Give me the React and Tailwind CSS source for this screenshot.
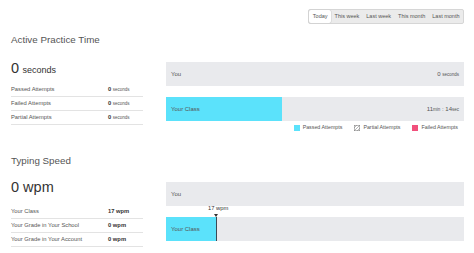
import React from "react";

const ranges = ["Today", "This week", "Last week", "This month", "Last month"];

function StatRow({ label, children }) {
  return (
    <div className="flex h-[14px] items-center border-b border-[#e3e3e3] text-[5.8px] text-[#555]">
      <div className="w-[97px]">{label}</div>
      <div className="font-bold text-[#333]">{children}</div>
    </div>
  );
}

function Bar({ label, fill, right, marker }) {
  return (
    <div className="relative flex h-[24px] items-center bg-[#e9eaed] text-[6px] text-[#555]">
      {fill && <div className="absolute left-0 top-0 h-full bg-[#5be2fb]" style={{ width: fill }} />}
      {marker && (
        <div className="absolute top-0 h-full w-[1px] bg-[#3a4a55]" style={{ left: marker }}>
          <div className="absolute left-[-8px] top-[-12px] w-[17px] whitespace-nowrap text-center text-[5.8px] leading-[7px] text-[#333]">
            17 wpm
          </div>
          <div className="absolute left-[-2px] top-[-3px] h-0 w-0 border-x-[2.5px] border-t-[3px] border-x-transparent border-t-[#333]" />
        </div>
      )}
      <span className="relative pl-[5px]">{label}</span>
      <span className="relative ml-auto pr-[5px]">{right}</span>
    </div>
  );
}

function Legend() {
  return (
    <div className="mt-[3px] flex h-[8px] items-center justify-end gap-[12px] pr-[6px] text-[5.3px] text-[#555]">
      <div className="flex items-center gap-[3px]">
        <div className="h-[6px] w-[6px] bg-[#5be2fb]" />
        Passed Attempts
      </div>
      <div className="flex items-center gap-[3px]">
        <svg width="6" height="6" viewBox="0 0 6 6">
          <rect x="0.25" y="0.25" width="5.5" height="5.5" fill="#fff" stroke="#777" strokeWidth="0.5" />
          <path d="M0 3 L3 0 M0 6 L6 0 M3 6 L6 3" stroke="#888" strokeWidth="0.6" />
        </svg>
        Partial Attempts
      </div>
      <div className="flex items-center gap-[3px]">
        <div className="h-[6px] w-[6px] bg-[#f1507c]" />
        Failed Attempts
      </div>
    </div>
  );
}

export default function App() {
  return (
    <div
      className="h-[253px] w-[474px] overflow-hidden bg-white pl-[11px] pr-[10px]"
      style={{ fontFamily: '"Liberation Sans", Arial, sans-serif' }}
    >
      <div className="flex justify-end pt-[9px]">
        <div className="flex h-[15px] rounded-[2px] border border-[#d6d6d6] bg-[#ebebeb]">
          {ranges.map((r, i) => (
            <div
              key={r}
              className={
                i === 0
                  ? "flex items-center rounded-[2px] bg-white px-[3.5px] text-[5.5px] text-[#555] shadow-[0_0_0_0.5px_#cfcfcf]"
                  : "flex items-center px-[3.5px] text-[5.5px] text-[#555]"
              }
            >
              {r}
            </div>
          ))}
        </div>
      </div>

      <div className="mt-[10px] text-[9.8px] leading-[12px] text-[#555]">Active Practice Time</div>
      <div className="mt-[6px] flex items-start gap-[23px]">
        <div className="w-[132px] pt-[7px]">
          <div className="flex h-[18px] items-baseline gap-[3.5px] text-[#333]">
            <span className="text-[14.5px] leading-[18px]">0</span>
            <span className="text-[9px]">seconds</span>
          </div>
          <div className="mt-[6px]">
            {["Passed Attempts", "Failed Attempts", "Partial Attempts"].map((l) => (
              <StatRow key={l} label={l}>
                0 <span className="text-[4.5px] font-normal text-[#555]">seconds</span>
              </StatRow>
            ))}
          </div>
        </div>
        <div className="flex-1 pt-[10px]">
          <Bar
            label="You"
            right={
              <>
                0 <span className="text-[4.5px]">seconds</span>
              </>
            }
          />
          <div className="mt-[11px]">
            <Bar
              label="Your Class"
              fill="39%"
              right={
                <>
                  11<span className="text-[4.5px]">min</span> : 14<span className="text-[4.5px]">sec</span>
                </>
              }
            />
          </div>
          <Legend />
        </div>
      </div>

      <div className="mt-[23px] text-[9.8px] leading-[12px] text-[#555]">Typing Speed</div>
      <div className="flex items-start gap-[23px]">
        <div className="w-[132px] pt-[11px]">
          <div className="h-[18px] text-[14.5px] leading-[18px] text-[#333]">0 wpm</div>
          <div className="mt-[9px]">
            <StatRow label="Your Class">17 wpm</StatRow>
            <StatRow label="Your Grade in Your School">0 wpm</StatRow>
            <StatRow label="Your Grade in Your Account">0 wpm</StatRow>
          </div>
        </div>
        <div className="flex-1 pt-[15px]">
          <Bar label="You" />
          <div className="mt-[11px]">
            <Bar label="Your Class" fill="16.8%" marker="16.8%" />
          </div>
        </div>
      </div>
    </div>
  );
}
